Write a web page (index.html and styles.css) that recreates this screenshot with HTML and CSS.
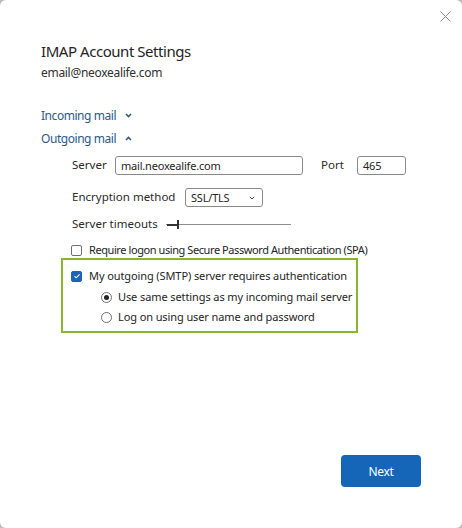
FILE: index.html
```html
<!DOCTYPE html>
<html lang="en">
<head>
<meta charset="UTF-8">
<title>IMAP Account Settings</title>
<link rel="stylesheet" href="styles.css">
</head>
<body>

<div class="dialog">
<button class="close" aria-label="Close">
<svg width="11" height="11" viewBox="0 0 11 11"><path d="M0.5 0.5L10.5 10.5M10.5 0.5L0.5 10.5" stroke="#8a8a8a" stroke-width="1"/></svg>
</button>

<div class="head">
<h1>IMAP Account Settings</h1>
<div class="email">email@neoxealife.com</div>
</div>

<div class="toggle">Incoming mail <span class="chev">
<svg width="7" height="5" viewBox="0 0 7 5"><path d="M1 1L3.5 3.6L6 1" fill="none" stroke="#2c5a88" stroke-width="1.5"/></svg></span></div>
<div class="toggle">Outgoing mail <span class="chev">
<svg width="7" height="5" viewBox="0 0 7 5"><path d="M1 4L3.5 1.4L6 4" fill="none" stroke="#2c5a88" stroke-width="1.5"/></svg></span></div>

<div class="settings">
<div class="row">
<label class="lbl w-server">Server</label>
<div class="field server">mail.neoxealife.com</div>
<label class="lbl w-port">Port</label>
<div class="field port">465</div>
</div>

<div class="row">
<label class="lbl w-enc">Encryption method</label>
<div class="field select">SSL/TLS
<svg width="6" height="4" viewBox="0 0 6 4"><path d="M0.8 0.8L3 3L5.2 0.8" fill="none" stroke="#444" stroke-width="1"/></svg></div>
</div>

<div class="row timeouts">
<label class="lbl w-time">Server timeouts</label>
<div class="slider"><span class="fill"></span><span class="thumb"></span></div>
</div>

<div class="check spa">
<span class="box"></span>
Require logon using Secure Password Authentication (SPA)
</div>

<div class="auth">
<div class="check">
<span class="box on">
<svg width="8" height="8" viewBox="0 0 8 8"><path d="M1.5 4.2L3.2 5.8L6.6 2.3" fill="none" stroke="#fff" stroke-width="1.1"/></svg>
</span>
My outgoing (SMTP) server requires authentication
</div>
<div class="radio"><span class="dot on"></span>Use same settings as my incoming mail server</div>
<div class="radio"><span class="dot"></span>Log on using user name and password</div>
</div>
</div>

<div class="foot">
<button class="next">Next</button>
</div>
</div>

</body>
</html>
```

FILE: styles.css
```css
*{box-sizing:border-box}
html,body{height:100%}
body{margin:0;background:#bdbdbd;font-family:"Noto Sans","Segoe UI",Arial,sans-serif;color:#242424;font-size:12px}

.dialog{position:relative;height:100%;background:#fff;border-radius:6px;padding:40px 0 0 41px;display:flex;flex-direction:column}
.close{position:absolute;top:10px;right:11px;border:none;background:none;padding:0;width:11px;height:11px}

.head{margin-bottom:26px}
h1{margin:0;font-size:15px;font-weight:400;line-height:22px;letter-spacing:-0.45px}
.email{margin-top:3px;line-height:16px;letter-spacing:-0.3px;color:#303030}

.toggle{color:#2c5a88;line-height:18px;letter-spacing:-0.45px;margin-bottom:5px;display:flex;align-items:center}
.chev{display:inline-flex;margin-left:9px;margin-top:-1px}

/* outgoing server block */
.settings{padding-left:31px;margin-top:3px}
.row{display:flex;align-items:center;height:19px}
.row + .row{margin-top:13px}
.lbl{line-height:16px;margin-bottom:2px;flex:none;font-size:11.5px;color:#2a2a2a}
.w-server{width:43px}
.w-port{width:36px;margin-left:18px}
.w-enc{width:113px}
.w-time{width:94px}

.field{height:19px;border:1px solid #8a8a8a;border-radius:3px;padding-left:5px;line-height:17px;font-size:11px;letter-spacing:-0.2px}
.server{width:188px}
.port{width:49px}
.select{width:78px;display:flex;justify-content:space-between;align-items:center;padding-right:7px}

.row.timeouts{margin-top:8px}
.slider{position:relative;width:125px;height:10px}
.slider::before{content:"";position:absolute;left:0;right:0;top:4px;height:1px;background:#8d8d8d}
.fill{position:absolute;left:1px;width:11px;top:4px;height:2px;background:#333}
.thumb{position:absolute;left:11px;top:0;width:2px;height:9px;background:#333}

.check{display:flex;align-items:center;line-height:16px;font-size:11px;letter-spacing:-0.1px}
.check.spa{margin:8px 0 0 -1px;letter-spacing:-0.42px}
.box{width:11px;height:11px;border:1px solid #6f6f6f;border-radius:2px;margin-right:7px;display:inline-flex;align-items:center;justify-content:center;flex:none}
.box.on{background:#1c65b5;border-color:#1c65b5}

.auth{border:2px solid #8ab52e;width:297px;margin-left:-11px;padding:8px 0 6px 8px}
.radio{display:flex;align-items:center;line-height:16px;font-size:11px;letter-spacing:-0.1px;margin:5px 0 0 30px}
.radio + .radio{margin-top:4px}
.dot{width:11px;height:11px;border:1px solid #6f6f6f;border-radius:50%;margin-right:6px;position:relative;flex:none}
.dot.on::after{content:"";position:absolute;left:2px;top:2px;width:5px;height:5px;border-radius:50%;background:#222}

.foot{margin-top:auto;display:flex;justify-content:flex-end;padding:0 41px 41px 0}
.next{width:80px;height:32px;border:none;border-radius:4px;background:#1566b9;color:#fff;font:12px "Noto Sans","Segoe UI",Arial,sans-serif;letter-spacing:-0.3px}
```
